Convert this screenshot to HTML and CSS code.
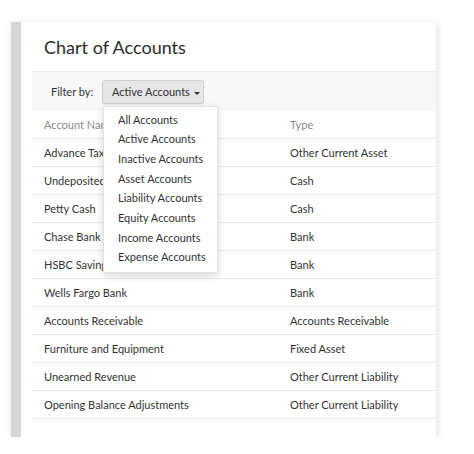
FILE: index.html
```html
<!DOCTYPE html>
<html lang="en">
<head>
    <meta charset="UTF-8">
    <title>Chart of Accounts</title>
    <link rel="stylesheet" href="styles.css">
</head>
<body>
    <div class="frame">
        <div class="card">
            <h1 class="title">Chart of Accounts</h1>
            <div class="content">
                <div class="filter-bar">
                    <span class="filter-label">Filter by:</span>
                    <div class="filter-drop">
                        <button class="filter-btn">Active Accounts <span class="caret"></span></button>
                        <ul class="menu">
                            <li>All Accounts</li>
                            <li>Active Accounts</li>
                            <li>Inactive Accounts</li>
                            <li>Asset Accounts</li>
                            <li>Liability Accounts</li>
                            <li>Equity Accounts</li>
                            <li>Income Accounts</li>
                            <li>Expense Accounts</li>
                        </ul>
                    </div>
                </div>
                <table class="accounts">
                    <thead>
                        <tr><th>Account Name</th><th>Type</th></tr>
                    </thead>
                    <tbody>
                        <tr><td>Advance Tax</td><td>Other Current Asset</td></tr>
                        <tr><td>Undeposited Funds</td><td>Cash</td></tr>
                        <tr><td>Petty Cash</td><td>Cash</td></tr>
                        <tr><td>Chase Bank</td><td>Bank</td></tr>
                        <tr><td>HSBC Savings</td><td>Bank</td></tr>
                        <tr><td>Wells Fargo Bank</td><td>Bank</td></tr>
                        <tr><td>Accounts Receivable</td><td>Accounts Receivable</td></tr>
                        <tr><td>Furniture and Equipment</td><td>Fixed Asset</td></tr>
                        <tr><td>Unearned Revenue</td><td>Other Current Liability</td></tr>
                        <tr><td>Opening Balance Adjustments</td><td>Other Current Liability</td></tr>
                    </tbody>
                </table>
            </div>
        </div>
    </div>
</body>
</html>
```
FILE: styles.css
```css
body {
    margin: 0;
    background: #fff;
    font-family: Lato, "Open Sans", sans-serif;
    color: #333;
}
.frame {
    margin: 22px 0 0 11px;
    width: 415px;
    border-left: 10px solid #d6d6d6;
    box-shadow: 1px 2px 7px rgba(0,0,0,0.13);
}
.card {
    background: #fff;
    padding-bottom: 18px;
}
.title {
    margin: 0;
    height: 49px;
    line-height: 50px;
    padding-left: 23px;
    font-size: 18px;
    font-weight: normal;
    color: #2b2b2b;
}
.content {
    margin-left: 11px;
}
.filter-bar {
    display: flex;
    align-items: center;
    height: 39px;
    border-top: 1px solid #ececec;
    background: #f8f8f8;
    padding-left: 19px;
    font-size: 11px;
}
.filter-label {
    width: 51px;
}
.filter-drop {
    position: relative;
}
.filter-btn {
    height: 24px;
    width: 102px;
    padding: 0 0 0 9px;
    text-align: left;
    font-family: inherit;
    font-size: 11px;
    color: #333;
    background: #e6e6e6;
    border: 1px solid #cfcfcf;
    border-radius: 3px;
    box-shadow: 0 1px 1px rgba(0,0,0,0.06);
}
.caret {
    display: inline-block;
    vertical-align: middle;
    margin-left: 1px;
    border-left: 3px solid transparent;
    border-right: 3px solid transparent;
    border-top: 3px solid #333;
}
.menu {
    position: absolute;
    top: 26px;
    left: 1px;
    width: 113px;
    margin: 0;
    padding: 3px 0 5px 0;
    list-style: none;
    background: #fff;
    border: 1px solid #e2e2e2;
    border-radius: 2px;
    box-shadow: 0 3px 8px rgba(0,0,0,0.16);
    z-index: 2;
}
.menu li {
    height: 19.7px;
    line-height: 19.7px;
    padding-left: 14px;
    font-size: 11px;
    color: #333;
}
.accounts {
    width: 100%;
    table-layout: fixed;
    border-collapse: collapse;
    font-size: 11px;
}
.accounts th,
.accounts td {
    height: 27px;
    padding: 0 0 0 12px;
    text-align: left;
    border-bottom: 1px solid #ebebeb;
}
.accounts th {
    font-weight: normal;
    color: #8a8a8a;
}
.accounts th:first-child {
    width: 234px;
}
```
